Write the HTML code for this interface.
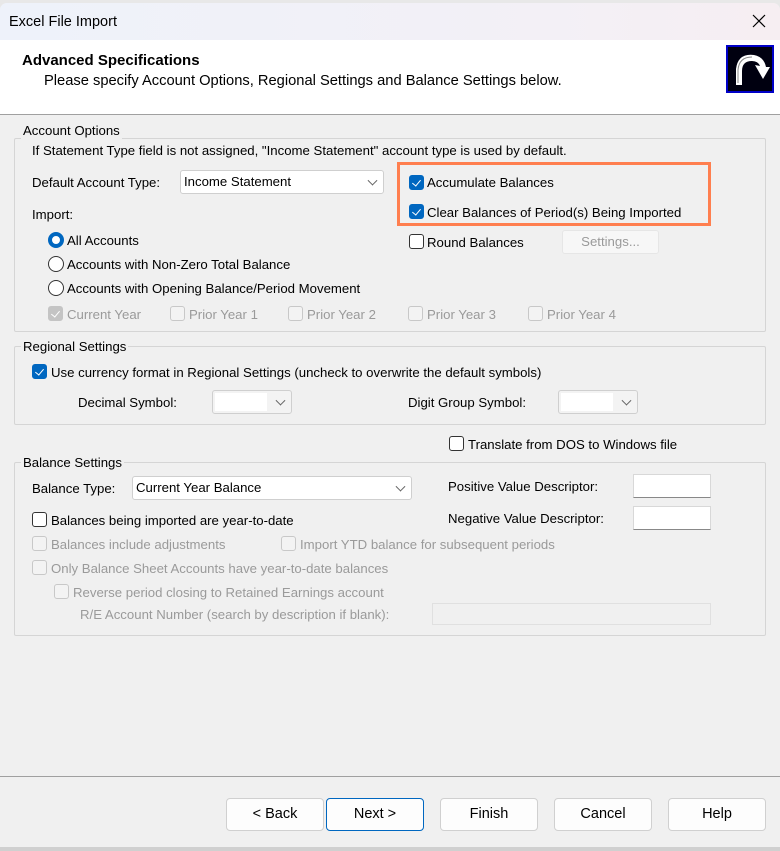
<!DOCTYPE html>
<html><head><meta charset="utf-8"><style>
*{box-sizing:border-box;margin:0;padding:0}
body{width:780px;height:851px;background:#e8e8e8;font-family:"Liberation Sans",sans-serif;font-size:13.2px;color:#000;position:relative;overflow:hidden}
.a{position:absolute;white-space:nowrap;line-height:16px;margin-top:1px}
.g{color:#9a9a9a}
.cb{position:absolute;width:15px;height:15px;border:1px solid #333;border-radius:3px;background:#fff}
.cb.on{background:#0067c0;border-color:#0067c0}
.cb.on::after{content:"";position:absolute;left:4px;top:2px;width:4px;height:7px;border:solid #fff;border-width:0 1.3px 1.3px 0;transform:rotate(40deg)}
.cb.dis{border-color:#c8c8c8;background:#f3f3f3}
.cb.don{background:#c4c4c4;border-color:#c4c4c4}
.cb.don::after{content:"";position:absolute;left:4px;top:2px;width:4px;height:7px;border:solid #fff;border-width:0 1.3px 1.3px 0;transform:rotate(40deg)}
.rb{position:absolute;width:16px;height:16px;border:1px solid #333;border-radius:50%;background:#fff}
.rb.on{border:4.5px solid #0067c0;background:#fff}
.grp{position:absolute;border:1px solid #d5d5d5;border-radius:2px}
.combo{position:absolute;background:#fff;border:1px solid #cfcfcf;border-radius:3px}
.combo::after{content:"";position:absolute;right:7px;top:50%;width:6px;height:6px;border:solid #666;border-width:0 1px 1px 0;transform:translateY(-70%) rotate(45deg)}
.btn{position:absolute;top:798px;width:98px;height:33px;background:#fdfdfd;border:1px solid #d0d0d0;border-radius:4px;text-align:center;line-height:31px;font-size:14.5px}
.tb{position:absolute;background:#fff;border:1px solid #d8d8d8;border-bottom:1px solid #888}
</style></head><body>
<div style="position:absolute;left:0;top:3px;width:780px;height:845px;background:#f0f0f0;border-radius:7px 7px 0 0"></div>
<div style="position:absolute;left:0;top:3px;width:780px;height:37px;background:linear-gradient(90deg,#eef2fa,#f3f0f6 70%,#f6eef2);border-radius:7px 7px 0 0"></div>
<div class="a" style="left:9px;top:13px;font-size:14.5px">Excel File Import</div>
<svg style="position:absolute;left:752px;top:14px" width="14" height="14" viewBox="0 0 14 14"><path d="M1 1L13 13M13 1L1 13" stroke="#000" stroke-width="1.2"/></svg>
<div style="position:absolute;left:0;top:40px;width:780px;height:75px;background:#fff;border-bottom:1px solid #a0a0a0"></div>
<div class="a" style="left:22px;top:52px;font-size:15px;font-weight:bold">Advanced Specifications</div>
<div class="a" style="left:44px;top:72px;font-size:14.7px">Please specify Account Options, Regional Settings and Balance Settings below.</div>
<svg style="position:absolute;left:726px;top:45px" width="48" height="48" viewBox="0 0 48 48"><rect width="48" height="48" fill="#0000c8"/><rect x="2" y="2" width="44" height="44" fill="#000010"/><path d="M10 40 V24 Q12 8 28 10 Q38 12 40 22 L44 22 L37 34 L29 20 L34 21 Q32 16 26 16 Q16 16 16 26 V40 Z" fill="#fff"/><path d="M12 38 V25 Q13 12 26 12" stroke="#888" stroke-width="1" fill="none"/></svg>

<div class="grp" style="left:14px;top:138px;width:752px;height:194px"></div>
<div class="a" style="left:21px;top:122px;background:#f0f0f0;padding:0 2px">Account Options</div>
<div class="a" style="left:32px;top:142px">If Statement Type field is not assigned, "Income Statement" account type is used by default.</div>
<div class="a" style="left:32px;top:174px">Default Account Type:</div>
<div class="combo" style="left:180px;top:170px;width:204px;height:24px"><span class="a" style="left:3px;top:2px">Income Statement</span></div>
<div class="a" style="left:32px;top:206px">Import:</div>
<div class="rb on" style="left:48px;top:232px"></div><div class="a" style="left:67px;top:232px">All Accounts</div>
<div class="rb" style="left:48px;top:256px"></div><div class="a" style="left:67px;top:256px">Accounts with Non-Zero Total Balance</div>
<div class="rb" style="left:48px;top:280px"></div><div class="a" style="left:67px;top:280px">Accounts with Opening Balance/Period Movement</div>
<div class="cb don" style="left:48px;top:306px"></div><div class="a g" style="left:67px;top:306px">Current Year</div>
<div class="cb dis" style="left:170px;top:306px"></div><div class="a g" style="left:189px;top:306px">Prior Year 1</div>
<div class="cb dis" style="left:288px;top:306px"></div><div class="a g" style="left:307px;top:306px">Prior Year 2</div>
<div class="cb dis" style="left:408px;top:306px"></div><div class="a g" style="left:427px;top:306px">Prior Year 3</div>
<div class="cb dis" style="left:528px;top:306px"></div><div class="a g" style="left:547px;top:306px">Prior Year 4</div>

<div style="position:absolute;left:397px;top:162px;width:314px;height:64px;border:3px solid #ff7f4f"></div>
<div class="cb on" style="left:409px;top:175px"></div><div class="a" style="left:427px;top:174px">Accumulate Balances</div>
<div class="cb on" style="left:409px;top:204px"></div><div class="a" style="left:427px;top:204px">Clear Balances of Period(s) Being Imported</div>
<div class="cb" style="left:409px;top:234px"></div><div class="a" style="left:427px;top:234px">Round Balances</div>
<div style="position:absolute;left:562px;top:230px;width:97px;height:24px;background:#f7f7f7;border:1px solid #e6e6e6;border-radius:3px;text-align:center;line-height:22px;color:#9a9a9a">Settings...</div>

<div class="grp" style="left:14px;top:346px;width:752px;height:79px"></div>
<div class="a" style="left:21px;top:338px;background:#f0f0f0;padding:0 2px">Regional Settings</div>
<div class="cb on" style="left:32px;top:364px"></div><div class="a" style="left:51px;top:364px">Use currency format in Regional Settings (uncheck to overwrite the default symbols)</div>
<div class="a" style="left:78px;top:394px">Decimal Symbol:</div>
<div class="combo" style="left:212px;top:390px;width:80px;height:24px;background:#f3f3f3"><span style="position:absolute;left:2px;top:2px;width:52px;height:18px;background:#fff"></span></div>
<div class="a" style="left:408px;top:394px">Digit Group Symbol:</div>
<div class="combo" style="left:558px;top:390px;width:80px;height:24px;background:#f3f3f3"><span style="position:absolute;left:2px;top:2px;width:52px;height:18px;background:#fff"></span></div>

<div class="cb" style="left:449px;top:436px"></div><div class="a" style="left:468px;top:436px">Translate from DOS to Windows file</div>

<div class="grp" style="left:14px;top:462px;width:752px;height:174px"></div>
<div class="a" style="left:21px;top:454px;background:#f0f0f0;padding:0 2px">Balance Settings</div>
<div class="a" style="left:32px;top:480px">Balance Type:</div>
<div class="combo" style="left:132px;top:476px;width:280px;height:24px"><span class="a" style="left:3px;top:2px">Current Year Balance</span></div>
<div class="a" style="left:448px;top:478px">Positive Value Descriptor:</div>
<div class="tb" style="left:633px;top:474px;width:78px;height:24px"></div>
<div class="a" style="left:448px;top:510px">Negative Value Descriptor:</div>
<div class="tb" style="left:633px;top:506px;width:78px;height:24px"></div>
<div class="cb" style="left:32px;top:512px"></div><div class="a" style="left:51px;top:512px">Balances being imported are year-to-date</div>
<div class="cb dis" style="left:32px;top:536px"></div><div class="a g" style="left:51px;top:536px">Balances include adjustments</div>
<div class="cb dis" style="left:281px;top:536px"></div><div class="a g" style="left:300px;top:536px">Import YTD balance for subsequent periods</div>
<div class="cb dis" style="left:32px;top:560px"></div><div class="a g" style="left:51px;top:560px">Only Balance Sheet Accounts have year-to-date balances</div>
<div class="cb dis" style="left:54px;top:584px"></div><div class="a g" style="left:73px;top:584px">Reverse period closing to Retained Earnings account</div>
<div class="a g" style="left:80px;top:606px">R/E Account Number (search by description if blank):</div>
<div style="position:absolute;left:432px;top:603px;width:279px;height:22px;border:1px solid #e0e0e0;background:#f0f0f0"></div>

<div style="position:absolute;left:0;top:776px;width:780px;height:1px;background:#a0a0a0"></div>
<div class="btn" style="left:226px">&lt; Back</div>
<div class="btn" style="left:326px;border-color:#0067c0">Next &gt;</div>
<div class="btn" style="left:440px">Finish</div>
<div class="btn" style="left:554px">Cancel</div>
<div class="btn" style="left:668px">Help</div>
<div style="position:absolute;left:0;top:847px;width:780px;height:4px;background:#d0d0d0"></div>
</body></html>
